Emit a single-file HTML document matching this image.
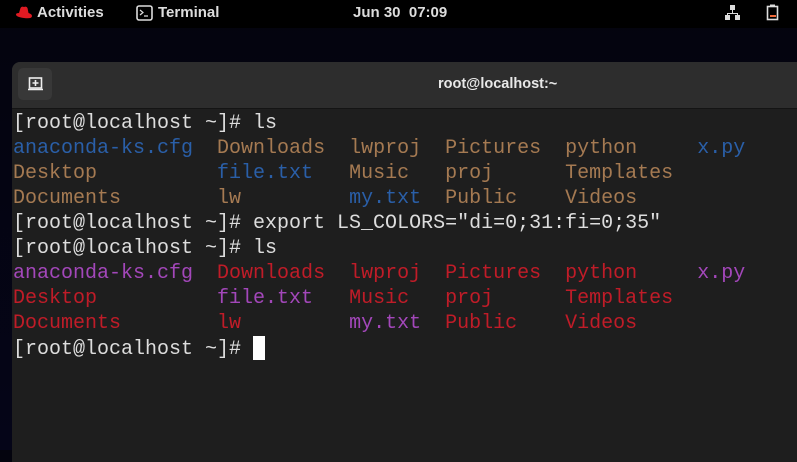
<!DOCTYPE html>
<html><head><style>
body{margin:0;width:797px;height:450px;overflow:hidden;background:linear-gradient(#04040e,#050518);font-family:"Liberation Sans",sans-serif;position:relative}
#top{position:absolute;left:0;top:0;width:797px;height:28px;background:#000;color:#ddd;font-size:15px;font-weight:bold}
#top span{position:absolute;top:4px}
#win{position:absolute;left:12px;top:62px;width:800px;height:400px;background:#1e1e1e;border-radius:8px 0 0 0;overflow:hidden}
#tb{height:46px;background:#2d2d2d;border-bottom:1px solid #141414;position:relative}
#tb .t{position:absolute;left:426px;top:14px;color:#e8e8e8;font-size:14.5px;font-weight:bold}
#btn{position:absolute;left:6px;top:6px;width:34px;height:32px;background:#383838;border-radius:5px}
pre{margin:0;position:absolute;left:1px;top:48px;font-family:"Liberation Mono","DejaVu Sans Mono",monospace;font-size:20px;line-height:25px;color:#ddd}
.b{color:#2a5fa8}.o{color:#a57a52}.r{color:#c01c28}.p{color:#a347ba}
.cur{display:inline-block;width:12px;height:24px;background:#fff;vertical-align:-6px}
</style></head><body>
<div id="top">
<svg style="position:absolute;left:15px;top:6px" width="18" height="14" viewBox="0 0 18 14"><path d="M4 7 L5.5 2 Q6.5 0 9 1 Q11.5 0 12.5 2 L13.5 7 Q17 8 17 10 Q17 13 9 12 Q1 11 1 8.5 Q1 7 4 7Z" fill="#e01a22"/></svg>
<span style="left:37px">Activities</span>
<svg style="position:absolute;left:136px;top:5px" width="17" height="16"><rect x="1" y="1" width="15" height="14" rx="2" fill="none" stroke="#ddd" stroke-width="1.6"/><path d="M4 5l3 2.5-3 2.5M8 11h4" stroke="#ddd" fill="none" stroke-width="1.2"/></svg>
<span style="left:158px">Terminal</span>
<span style="left:353px">Jun 30&nbsp; 07:09</span>
<svg style="position:absolute;left:725px;top:5px" width="16" height="16" fill="#ddd"><rect x="5" y="0" width="5" height="5"/><rect x="0" y="10" width="5" height="5"/><rect x="10" y="10" width="5" height="5"/><path d="M7 5v3H2v2h1V9h9v1h1V8H8V5z"/></svg>
<svg style="position:absolute;left:766px;top:4px" width="14" height="17"><rect x="1.5" y="2.5" width="10" height="13" fill="none" stroke="#ddd" stroke-width="1.6"/><rect x="4" y="0.5" width="5" height="2" fill="#ddd"/><rect x="4" y="11" width="6" height="2" fill="#f06a3a"/></svg>
</div>
<div id="win">
<div id="tb"><div id="btn"><svg style="position:absolute;left:10px;top:9px" width="15" height="14"><rect x="1.5" y="1" width="12" height="10" fill="none" stroke="#eee" stroke-width="1.6"/><path d="M7.5 3v6M4.5 6h6" stroke="#eee" stroke-width="1.6"/><path d="M0 12.5h15" stroke="#eee" stroke-width="1.6"/></svg></div><div class="t">root@localhost:~</div></div>
<pre style="top:49px">[root@localhost ~]# ls
<span class="b">anaconda-ks.cfg</span>  <span class="o">Downloads</span>  <span class="o">lwproj</span>  <span class="o">Pictures</span>  <span class="o">python</span>     <span class="b">x.py</span>
<span class="o">Desktop</span>          <span class="b">file.txt</span>   <span class="o">Music</span>   <span class="o">proj</span>      <span class="o">Templates</span>
<span class="o">Documents</span>        <span class="o">lw</span>         <span class="b">my.txt</span>  <span class="o">Public</span>    <span class="o">Videos</span>
[root@localhost ~]# export LS_COLORS="di=0;31:fi=0;35"
[root@localhost ~]# ls
<span class="p">anaconda-ks.cfg</span>  <span class="r">Downloads</span>  <span class="r">lwproj</span>  <span class="r">Pictures</span>  <span class="r">python</span>     <span class="p">x.py</span>
<span class="r">Desktop</span>          <span class="p">file.txt</span>   <span class="r">Music</span>   <span class="r">proj</span>      <span class="r">Templates</span>
<span class="r">Documents</span>        <span class="r">lw</span>         <span class="p">my.txt</span>  <span class="r">Public</span>    <span class="r">Videos</span>
[root@localhost ~]# <span class="cur"></span></pre>
</div>
</body></html>
